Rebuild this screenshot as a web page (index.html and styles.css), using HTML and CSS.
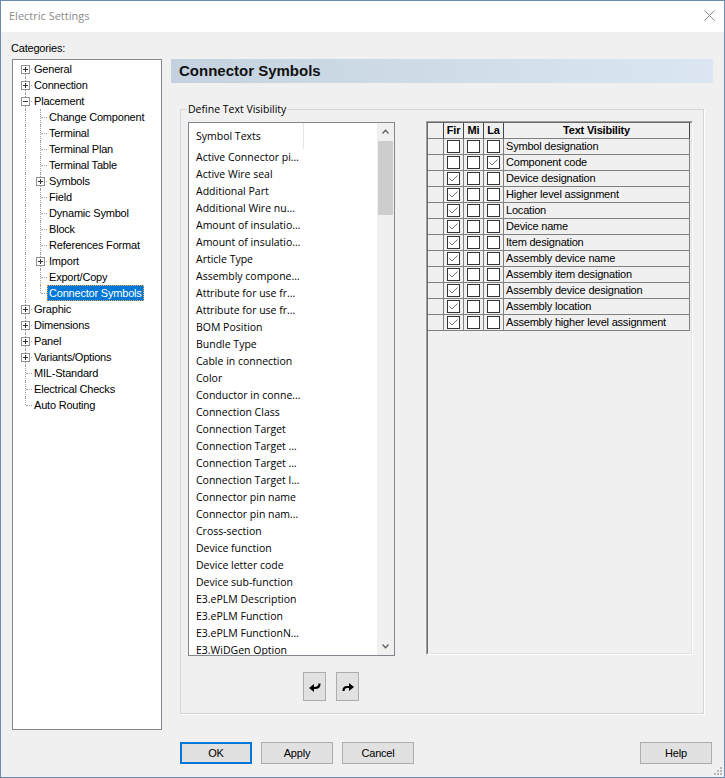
FILE: index.html
```html
<!DOCTYPE html>
<html lang="en">
<head>
    <meta charset="UTF-8">
    <meta name="viewport" content="width=device-width, initial-scale=1.0">
    <title>Electric Settings</title>
    <link rel="stylesheet" href="styles.css">
</head>
<body>
    <div class="window">
        <div class="titlebar">
            <span class="title">Electric Settings</span>
            <svg class="close" width="11" height="11" viewBox="0 0 11 11">
                <path d="M0.5 0.5 L10.5 10.5 M10.5 0.5 L0.5 10.5" stroke="#8a8a8a" stroke-width="1" fill="none"/>
            </svg>
        </div>

        <div class="client">
            <div class="main">
                <!-- Category tree -->
                <div class="left">
                    <div class="label">Categories:</div>
                    <div class="tree">
                        <div class="node"><span class="guide first"><i class="exp plus"></i></span><span class="text">General</span></div>
                        <div class="node"><span class="guide"><i class="exp plus"></i></span><span class="text">Connection</span></div>
                        <div class="node"><span class="guide"><i class="exp"></i></span><span class="text">Placement</span></div>
                        <div class="node"><span class="guide pipe"></span><span class="guide"></span><span class="text">Change Component</span></div>
                        <div class="node"><span class="guide pipe"></span><span class="guide"></span><span class="text">Terminal</span></div>
                        <div class="node"><span class="guide pipe"></span><span class="guide"></span><span class="text">Terminal Plan</span></div>
                        <div class="node"><span class="guide pipe"></span><span class="guide"></span><span class="text">Terminal Table</span></div>
                        <div class="node"><span class="guide pipe"></span><span class="guide"><i class="exp plus"></i></span><span class="text">Symbols</span></div>
                        <div class="node"><span class="guide pipe"></span><span class="guide"></span><span class="text">Field</span></div>
                        <div class="node"><span class="guide pipe"></span><span class="guide"></span><span class="text">Dynamic Symbol</span></div>
                        <div class="node"><span class="guide pipe"></span><span class="guide"></span><span class="text">Block</span></div>
                        <div class="node"><span class="guide pipe"></span><span class="guide"></span><span class="text">References Format</span></div>
                        <div class="node"><span class="guide pipe"></span><span class="guide"><i class="exp plus"></i></span><span class="text">Import</span></div>
                        <div class="node"><span class="guide pipe"></span><span class="guide"></span><span class="text">Export/Copy</span></div>
                        <div class="node sel"><span class="guide pipe"></span><span class="guide end"></span><span class="text">Connector Symbols</span></div>
                        <div class="node"><span class="guide"><i class="exp plus"></i></span><span class="text">Graphic</span></div>
                        <div class="node"><span class="guide"><i class="exp plus"></i></span><span class="text">Dimensions</span></div>
                        <div class="node"><span class="guide"><i class="exp plus"></i></span><span class="text">Panel</span></div>
                        <div class="node"><span class="guide"><i class="exp plus"></i></span><span class="text">Variants/Options</span></div>
                        <div class="node"><span class="guide"></span><span class="text">MIL-Standard</span></div>
                        <div class="node"><span class="guide"></span><span class="text">Electrical Checks</span></div>
                        <div class="node"><span class="guide end"></span><span class="text">Auto Routing</span></div>
                    </div>
                </div>

                <!-- Settings page -->
                <div class="right">
                    <div class="page-head">Connector Symbols</div>

                    <fieldset class="group">
                        <legend>Define Text Visibility</legend>
                        <div class="group-body">
                            <div class="list-col">
                                <div class="listbox">
                                    <div class="lb-main">
                                        <div class="lb-head"><span>Symbol Texts</span></div>
                                        <div class="lb-item">Active Connector pi…</div>
                                        <div class="lb-item">Active Wire seal</div>
                                        <div class="lb-item">Additional Part</div>
                                        <div class="lb-item">Additional Wire nu…</div>
                                        <div class="lb-item">Amount of insulatio…</div>
                                        <div class="lb-item">Amount of insulatio…</div>
                                        <div class="lb-item">Article Type</div>
                                        <div class="lb-item">Assembly compone…</div>
                                        <div class="lb-item">Attribute for use fr…</div>
                                        <div class="lb-item">Attribute for use fr…</div>
                                        <div class="lb-item">BOM Position</div>
                                        <div class="lb-item">Bundle Type</div>
                                        <div class="lb-item">Cable in connection</div>
                                        <div class="lb-item">Color</div>
                                        <div class="lb-item">Conductor in conne…</div>
                                        <div class="lb-item">Connection Class</div>
                                        <div class="lb-item">Connection Target</div>
                                        <div class="lb-item">Connection Target …</div>
                                        <div class="lb-item">Connection Target …</div>
                                        <div class="lb-item">Connection Target l…</div>
                                        <div class="lb-item">Connector pin name</div>
                                        <div class="lb-item">Connector pin nam…</div>
                                        <div class="lb-item">Cross-section</div>
                                        <div class="lb-item">Device function</div>
                                        <div class="lb-item">Device letter code</div>
                                        <div class="lb-item">Device sub-function</div>
                                        <div class="lb-item">E3.ePLM Description</div>
                                        <div class="lb-item">E3.ePLM Function</div>
                                        <div class="lb-item">E3.ePLM FunctionN…</div>
                                        <div class="lb-item">E3.WiDGen Option</div>
                                    </div>
                                    <div class="lb-scroll">
                                        <div class="sb-btn">
                                            <svg width="7" height="5" viewBox="0 0 7 5"><path d="M0.5 4.5 L3.5 1.2 L6.5 4.5" stroke="#606060" stroke-width="1.3" fill="none"/></svg>
                                        </div>
                                        <div class="sb-thumb"></div>
                                        <div class="sb-track"></div>
                                        <div class="sb-btn">
                                            <svg width="7" height="5" viewBox="0 0 7 5"><path d="M0.5 0.5 L3.5 3.8 L6.5 0.5" stroke="#606060" stroke-width="1.3" fill="none"/></svg>
                                        </div>
                                    </div>
                                </div>
                                <div class="move-buttons">
                                    <button class="icon-btn">
                                        <svg width="12" height="10" viewBox="0 0 12 10">
                                            <path d="M10.5 1.5 Q10.5 6 6 6 H4" stroke="#000" stroke-width="2.2" fill="none"/>
                                            <polygon points="0,6 5,2 5,10" fill="#000"/>
                                        </svg>
                                    </button>
                                    <button class="icon-btn">
                                        <svg width="12" height="10" viewBox="0 0 12 10">
                                            <path d="M1.5 9 Q1.5 5 5 5 H8" stroke="#000" stroke-width="2.2" fill="none"/>
                                            <polygon points="12,5 7,1 7,9" fill="#000"/>
                                        </svg>
                                    </button>
                                </div>
                            </div>

                            <div class="grid-frame">
                                <div class="grid-inner">
                                    <div class="grid" id="visibility-grid">
                                        <div class="cell head"></div>
                                        <div class="cell head">Fir</div>
                                        <div class="cell head">Mi</div>
                                        <div class="cell head">La</div>
                                        <div class="cell head">Text Visibility</div>
                                    </div>
                                </div>
                            </div>
                        </div>
                    </fieldset>
                </div>
            </div>

            <div class="footer">
                <button class="btn default">OK</button>
                <button class="btn">Apply</button>
                <button class="btn">Cancel</button>
                <button class="btn help">Help</button>
            </div>

            <svg class="grip" width="9" height="9" viewBox="0 0 9 9">
                <rect x="7" y="1" width="2" height="2" fill="#b8b8b8"/>
                <rect x="4" y="4" width="2" height="2" fill="#b8b8b8"/>
                <rect x="7" y="4" width="2" height="2" fill="#b8b8b8"/>
                <rect x="1" y="7" width="2" height="2" fill="#b8b8b8"/>
                <rect x="4" y="7" width="2" height="2" fill="#b8b8b8"/>
                <rect x="7" y="7" width="2" height="2" fill="#b8b8b8"/>
            </svg>
        </div>
    </div>

    <script>
        // Rows: text, first, middle, last
        const rows = [
            ['Symbol designation', false, false, false],
            ['Component code', false, false, true],
            ['Device designation', true, false, false],
            ['Higher level assignment', true, false, false],
            ['Location', true, false, false],
            ['Device name', true, false, false],
            ['Item designation', true, false, false],
            ['Assembly device name', true, false, false],
            ['Assembly item designation', true, false, false],
            ['Assembly device designation', true, false, false],
            ['Assembly location', true, false, false],
            ['Assembly higher level assignment', true, false, false]
        ];

        const checkMark = '<svg width="11" height="11" viewBox="0 0 11 11"><path d="M1.5 5.5 L4 8 L9.5 2.5" stroke="#6f6f6f" stroke-width="1" fill="none"/></svg>';
        const grid = document.getElementById('visibility-grid');

        function makeCell(cls, html) {
            const cell = document.createElement('div');
            cell.className = 'cell ' + cls;
            cell.innerHTML = html;
            return cell;
        }

        rows.forEach(row => {
            grid.appendChild(makeCell('row-head', ''));
            for (let i = 1; i <= 3; i++) {
                const box = '<span class="chk">' + (row[i] ? checkMark : '') + '</span>';
                grid.appendChild(makeCell('check', box));
            }
            grid.appendChild(makeCell('name', row[0]));
        });
    </script>
</body>
</html>
```

FILE: styles.css
```css
* {
    box-sizing: border-box;
}

body {
    margin: 0;
    font-family: "Liberation Sans", Arial, sans-serif;
    font-size: 11px;
    color: #000;
}

.window {
    width: 725px;
    height: 778px;
    border: 1px solid #6b8cb3;
    background-color: #f0f0f0;
    display: flex;
    flex-direction: column;
}

/* Title bar */
.titlebar {
    height: 31px;
    flex: none;
    background-color: #fff;
    display: flex;
    align-items: center;
    padding: 0 9px 2px 8px;
}

.title {
    flex: 1;
    font-family: "Open Sans", sans-serif;
    font-size: 11px;
    color: #8a8a8a;
}

.client {
    flex: 1;
    position: relative;
    display: flex;
    flex-direction: column;
}

.main {
    display: flex;
    padding: 9px 0 0 11px;
}

/* Left column: tree */
.left {
    width: 150px;
    flex: none;
}

.label {
    height: 14px;
    line-height: 14px;
    margin: 0 0 4px -1px;
    letter-spacing: -0.2px;
}

.tree {
    height: 671px;
    background-color: #fff;
    border: 1px solid #828790;
    padding: 1px 0 0 4px;
}

.node {
    display: flex;
    height: 16px;
}

.guide {
    width: 15px;
    height: 16px;
    flex: none;
    position: relative;
}

.guide::before {
    content: "";
    position: absolute;
    left: 8px;
    top: 0;
    bottom: 0;
    border-left: 1px dotted #a0a0a0;
}

.guide::after {
    content: "";
    position: absolute;
    left: 9px;
    top: 8px;
    width: 6px;
    border-top: 1px dotted #a0a0a0;
}

.guide.first::before {
    top: 8px;
}

.guide.end::before {
    bottom: 8px;
}

.guide.pipe::after {
    display: none;
}

.exp {
    position: absolute;
    left: 4px;
    top: 4px;
    width: 9px;
    height: 9px;
    border: 1px solid #919191;
    background-color: #fff;
    z-index: 1;
}

.exp::before {
    content: "";
    position: absolute;
    left: 1px;
    top: 3px;
    width: 5px;
    height: 1px;
    background-color: #333;
}

.exp.plus::after {
    content: "";
    position: absolute;
    left: 3px;
    top: 1px;
    width: 1px;
    height: 5px;
    background-color: #333;
}

.text {
    line-height: 16px;
    padding: 0 2px;
    white-space: nowrap;
    letter-spacing: -0.2px;
}

.node.sel .text {
    background-color: #0078d7;
    color: #fff;
    outline: 1px dotted #f0a848;
    outline-offset: -1px;
}

/* Right column */
.right {
    width: 542px;
    flex: none;
    margin-left: 9px;
    padding-top: 18px;
}

.page-head {
    height: 24px;
    line-height: 24px;
    padding-left: 8px;
    font-size: 15px;
    font-weight: bold;
    color: #111;
    background: linear-gradient(to right, #c4d2df, #dbe6f2);
}

.group {
    width: 524px;
    min-width: 0;
    margin: 19px 0 0 9px;
    padding: 6px 10px 12px 7px;
    border: 1px solid #d5d5d5;
    box-shadow: 1px 1px 0 #fff;
}

.group legend {
    font-family: "Open Sans", sans-serif;
    font-size: 10.5px;
    line-height: 14px;
    padding: 0 1px;
    margin-left: -1px;
}

.group-body {
    display: flex;
    gap: 31px;
}

/* List of symbol texts */
.listbox {
    width: 207px;
    height: 534px;
    border: 1px solid #828790;
    background-color: #fff;
    display: flex;
    font-family: "Open Sans", sans-serif;
    font-size: 10.5px;
}

.lb-main {
    flex: 1;
    overflow: hidden;
}

.lb-head {
    height: 26px;
    display: flex;
}

.lb-head span {
    width: 115px;
    line-height: 26px;
    padding-left: 7px;
    border-right: 1px solid #e5e5e5;
}

.lb-item {
    height: 17px;
    line-height: 17px;
    padding-left: 7px;
    white-space: nowrap;
}

.lb-scroll {
    width: 17px;
    flex: none;
    background-color: #f0f0f0;
    display: flex;
    flex-direction: column;
}

.sb-btn {
    height: 17px;
    flex: none;
    display: flex;
    align-items: center;
    justify-content: center;
}

.sb-thumb {
    height: 74px;
    flex: none;
    margin: 1px 1px 0 1px;
    background-color: #cdcdcd;
}

.sb-track {
    flex: 1;
}

.move-buttons {
    display: flex;
    gap: 10px;
    padding-left: 115px;
    margin-top: 16px;
}

.icon-btn {
    width: 23px;
    height: 29px;
    padding: 0;
    border: 1px solid #adadad;
    background-color: #e1e1e1;
    display: flex;
    align-items: center;
    justify-content: center;
}

/* Visibility grid */
.grid-frame {
    width: 267px;
    height: 534px;
    margin-top: -1px;
    border: 1px solid;
    border-color: #a0a0a0 #fff #fff #a0a0a0;
}

.grid-inner {
    height: 100%;
    border: 1px solid;
    border-color: #696969 #e3e3e3 #e3e3e3 #696969;
    background-color: #f0f0f0;
}

.grid {
    display: grid;
    grid-template-columns: 16px 20px 20px 20px 186px;
    grid-auto-rows: 16px;
}

.cell {
    border-right: 1px solid #808080;
    border-bottom: 1px solid #808080;
    background-color: #f0f0f0;
    line-height: 15px;
    letter-spacing: -0.2px;
    white-space: nowrap;
    overflow: hidden;
}

.cell.head {
    font-weight: bold;
    text-align: center;
    border-right-color: #444;
}

.cell.name {
    padding-left: 2px;
}

.cell.check {
    display: flex;
    justify-content: center;
    padding-top: 1px;
}

.chk {
    width: 13px;
    height: 13px;
    border: 1px solid #333;
    background-color: #fff;
    display: block;
}

.chk svg {
    display: block;
}

/* Dialog buttons */
.footer {
    display: flex;
    gap: 9px;
    padding: 12px 12px 0 179px;
}

.btn {
    width: 72px;
    height: 22px;
    padding: 0;
    border: 1px solid #adadad;
    background-color: #e1e1e1;
    font-family: "Liberation Sans", Arial, sans-serif;
    font-size: 11px;
    letter-spacing: -0.2px;
    color: #000;
}

.btn.default {
    border: 2px solid #0078d7;
}

.btn.help {
    margin-left: auto;
}

.grip {
    position: absolute;
    right: 2px;
    bottom: 2px;
}
```
